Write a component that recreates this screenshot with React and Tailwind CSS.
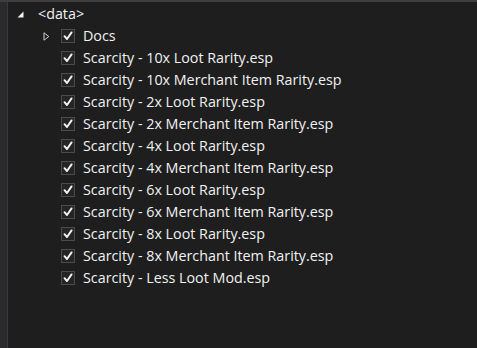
import { useState } from "react";

const FILES = [
    "Scarcity - 10x Loot Rarity.esp",
    "Scarcity - 10x Merchant Item Rarity.esp",
    "Scarcity - 2x Loot Rarity.esp",
    "Scarcity - 2x Merchant Item Rarity.esp",
    "Scarcity - 4x Loot Rarity.esp",
    "Scarcity - 4x Merchant Item Rarity.esp",
    "Scarcity - 6x Loot Rarity.esp",
    "Scarcity - 6x Merchant Item Rarity.esp",
    "Scarcity - 8x Loot Rarity.esp",
    "Scarcity - 8x Merchant Item Rarity.esp",
    "Scarcity - Less Loot Mod.esp",
];

function Check({ checked }) {
    return (
        <span className="flex h-[14px] w-[14px] shrink-0 items-center justify-center border border-[#4a4a4f] bg-[#252526]">
            {checked && (
                <svg width="10" height="10" viewBox="0 0 10 10">
                    <path d="M1.5 5.2 L4 8 L8.6 1.4" fill="none" stroke="#f4f4f4" strokeWidth="1.9" strokeLinecap="round" strokeLinejoin="round" />
                </svg>
            )}
        </span>
    );
}

function Row({ label, checked, toggle, expander }) {
    return (
        <div className="flex h-[22px] items-center">
            <div className="w-[33px] shrink-0" />
            <div className="flex w-[20px] shrink-0 items-center">
                {expander && (
                    <svg width="7" height="9" viewBox="0 0 7 9" className="ml-[2px]">
                        <path d="M1 0.8 L5.8 4.5 L1 8.2 Z" fill="none" stroke="#d0d0d0" strokeWidth="1" />
                    </svg>
                )}
            </div>
            <button onClick={toggle} className="flex items-center">
                <Check checked={checked} />
            </button>
            <span className="ml-[8px] whitespace-nowrap text-[14.3px] text-[#f1f1f1]">{label}</span>
        </div>
    );
}

export default function App() {
    const [checks, setChecks] = useState(() => Array(FILES.length + 1).fill(true));

    const toggle = (i) => setChecks(c => c.map((v, j) => (j === i ? !v : v)));

    return (
        <div className="flex h-[348px] w-[477px] flex-col overflow-hidden bg-[#1e1e1e] font-['Open_Sans','Noto_Sans',sans-serif]">
            <div className="h-[2px] bg-[#3d3d40]" />
            <div className="flex flex-1">
                <div className="w-[7px] bg-[#2a2a2c]" />
                <div className="w-[1px] bg-[#3a3a3d]" />
                <div className="flex-1 pt-[1px]">
                    <div className="flex h-[22px] items-center">
                        <svg width="7" height="7" viewBox="0 0 7 7" className="ml-[9px]">
                            <path d="M6.5 0.5 L6.5 6.5 L0.5 6.5 Z" fill="#f0f0f0" />
                        </svg>
                        <span className="ml-[14px] text-[14.3px] text-[#f1f1f1]">&lt;data&gt;</span>
                    </div>
                    <Row label="Docs" checked={checks[0]} toggle={() => toggle(0)} expander />
                    {FILES.map((f, i) => (
                        <Row key={f} label={f} checked={checks[i + 1]} toggle={() => toggle(i + 1)} />
                    ))}
                </div>
            </div>
        </div>
    );
}
